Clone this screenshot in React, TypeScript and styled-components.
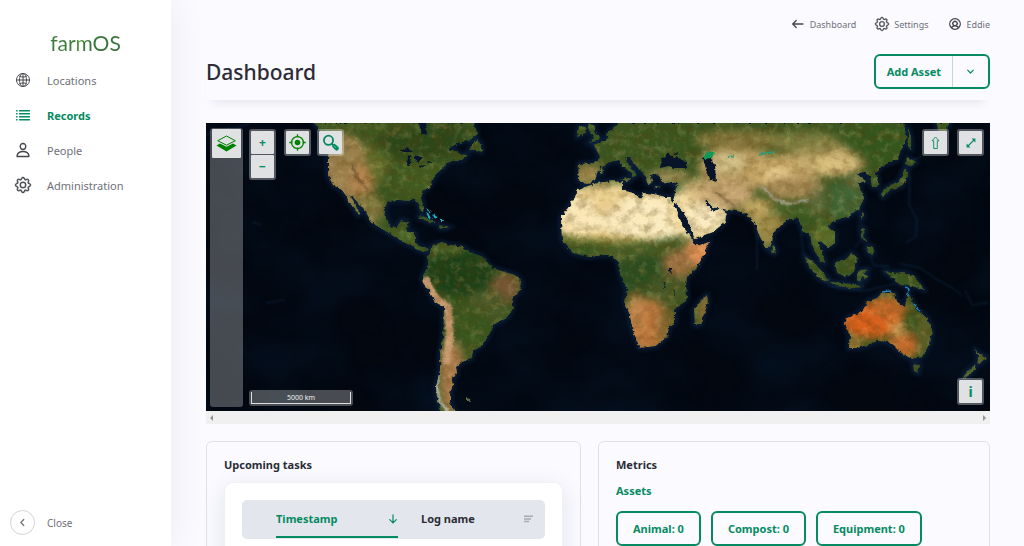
import React from "react";
import styled, { createGlobalStyle, css } from "styled-components";
import { IoGlobeOutline, IoPersonOutline } from "react-icons/io5";
import { BsGear } from "react-icons/bs";
import { PiUserCircleBold } from "react-icons/pi";

const green = "#058a62";
const ink = "#2b2c35";
const muted = "#6f7078";
const iconInk = "#45464c";

const GlobalStyle = createGlobalStyle`
  * { box-sizing: border-box; }
  body {
    margin: 0;
    background: #fafaff;
    color: ${ink};
    font-family: "Noto Sans", "Open Sans", sans-serif;
    font-size: 11px;
  }
  button { font: inherit; color: inherit; cursor: pointer; }
  a { color: inherit; text-decoration: none; }
  h1, h2, h3 { margin: 0; }
`;

const Shell = styled.div`
  display: grid;
  grid-template-columns: 171px minmax(0, 1fr);
  height: 100vh;
`;

const Sidebar = styled.aside`
  display: flex;
  flex-direction: column;
  background: #fff;
  box-shadow: 0 0 36px rgba(20, 45, 82, 0.07);
  z-index: 1;
`;

const Logo = styled.a`
  align-self: center;
  margin: 28px 0 10px;
  font-family: Lato, sans-serif;
  font-size: 21px;
  line-height: 30px;
  color: transparent;
  background: linear-gradient(90deg, #3f7d3f 0 34%, #5f9c35 42%, #38753c 48%);
  background-clip: text;
`;

const Nav = styled.nav`
  display: flex;
  flex-direction: column;
  gap: 11px;
`;

const NavLink = styled.a<{ $active?: boolean }>`
  display: flex;
  align-items: center;
  gap: 16px;
  height: 24px;
  padding-left: 15px;
  color: ${(p) => (p.$active ? green : muted)};
  font-weight: ${(p) => (p.$active ? 700 : 400)};
  svg { width: 16px; height: 16px; color: ${(p) => (p.$active ? green : iconInk)}; }
`;

const Gear = styled(BsGear)`
  stroke: currentColor;
  stroke-width: 0.4;
  overflow: visible;
`;

const Person = styled(IoPersonOutline)`
  path { stroke-width: 44; }
`;

const CollapseButton = styled.button`
  display: flex;
  align-items: center;
  gap: 12px;
  margin: auto 0 11px 10px;
  padding: 0;
  border: 0;
  background: none;
  color: ${muted};
  font-size: 10px;
`;

const CollapseCircle = styled.span`
  display: grid;
  place-items: center;
  width: 25px;
  height: 25px;
  border: 1px solid #d4d4d9;
  border-radius: 50%;
`;

const Main = styled.main`
  padding: 0 34px 0 35px;
  overflow-y: auto;
  scrollbar-width: none;
`;

const TopBar = styled.nav`
  display: flex;
  justify-content: flex-end;
  align-items: center;
  gap: 19px;
  height: 48px;
`;

const TopLink = styled.a`
  display: flex;
  align-items: center;
  gap: 5px;
  font-size: 9px;
  color: ${muted};
  svg { width: 14px; height: 14px; color: ${iconInk}; }
`;

const PageHeader = styled.header`
  display: flex;
  align-items: center;
  justify-content: space-between;
  height: 52px;
  padding-bottom: 5px;
  background: #fafaff;
  box-shadow: 0 9px 9px -6px rgba(35, 36, 41, 0.09);
`;

const Title = styled.h1`
  font-size: 21px;
  font-weight: 500;
  line-height: 30px;
`;

const SplitButton = styled.div`
  display: flex;
  height: 35px;
  border: 2px solid ${green};
  border-radius: 6px;
  color: ${green};
`;

const SplitPart = styled.button`
  display: grid;
  place-items: center;
  padding: 0 11px;
  border: 0;
  background: none;
  font-weight: 700;
  & + & { width: 36px; border-left: 1px solid #b7dcd2; }
`;

const MapFrame = styled.section`
  position: relative;
  height: 288px;
  margin-top: 23px;
  background: #020812;
  overflow: hidden;
  > svg { display: block; width: 100%; height: 100%; }
`;

const MapControl = styled.div<{ $x: number; $y: number; $side?: "left" | "right"; $from?: "top" | "bottom" }>`
  position: absolute;
  ${(p) => css`
    ${p.$side ?? "left"}: ${p.$x}px;
    ${p.$from ?? "top"}: ${p.$y}px;
  `}
  display: grid;
  gap: 1px;
  padding: 2px;
  border-radius: 3px;
  background: rgba(255, 255, 255, 0.32);
`;

const MapButton = styled.button`
  display: grid;
  place-items: center;
  width: 23px;
  height: 23px;
  padding: 0;
  border: 0;
  border-radius: 1px;
  background: #dfe1e2;
  color: ${green};
  font-size: 12px;
  font-weight: 700;
  line-height: 12px;
`;

const InfoButton = styled(MapButton)`
  font-size: 14px;
`;

const LayerPanel = styled.div`
  position: absolute;
  left: 4px;
  top: 5px;
  bottom: 4px;
  width: 33px;
  padding: 1px 2px;
  border-radius: 3px;
  background: rgba(255, 255, 255, 0.27);
`;

const LayerButton = styled(MapButton)`
  width: 29px;
  height: 29px;
`;

const ScaleBar = styled.div`
  position: absolute;
  left: 43px;
  bottom: 5px;
  width: 104px;
  padding: 2px;
  border-radius: 3px;
  background: rgba(255, 255, 255, 0.28);
`;

const ScaleInner = styled.div`
  height: 12px;
  border: 1px solid #ddd;
  border-top: 0;
  color: #eee;
  font-size: 7px;
  line-height: 12px;
  text-align: center;
`;

const ScrollTrack = styled.div`
  display: flex;
  justify-content: space-between;
  align-items: center;
  height: 13px;
  padding: 0 4px;
  background: #f0f0f1;
`;

const ScrollArrow = styled.button`
  display: grid;
  place-items: center;
  padding: 0;
  border: 0;
  background: none;
  color: #929292;
`;

const Columns = styled.div`
  display: grid;
  grid-template-columns: minmax(0, 1fr) minmax(0, 1fr);
  margin: 17px 0;
`;

const Panel = styled.section<{ $spaced?: boolean }>`
  min-height: 180px;
  margin-right: ${(p) => (p.$spaced ? 17 : 0)}px;
  padding: 16px 17px;
  border: 1px solid #e0e0e6;
  border-radius: 6px;
`;

const PanelTitle = styled.h2`
  font-size: 11px;
  font-weight: 700;
  line-height: 14px;
`;

const GroupTitle = styled.h3`
  margin: 12px 0 13px;
  color: ${green};
  font-size: 11px;
  line-height: 14px;
`;

const TableCard = styled.div`
  margin-top: 10px;
  padding: 17px 17px 40px;
  border: 1px solid #f1f1f5;
  border-radius: 9px;
  background: #fff;
  box-shadow: 0 6px 24px rgba(20, 45, 82, 0.1);
`;

const TaskTable = styled.table`
  width: 100%;
  border-collapse: separate;
  border-spacing: 0;
  table-layout: fixed;
`;

const HeadCell = styled.th<{ $width?: string }>`
  width: ${(p) => p.$width ?? "auto"};
  height: 39px;
  padding: 0;
  background: #e3e7ed;
  &:first-child { border-radius: 5px 0 0 5px; }
  &:last-child { padding: 0 12px 0 23px; border-radius: 0 5px 5px 0; }
`;

const SortButton = styled.button<{ $active?: boolean }>`
  display: flex;
  align-items: center;
  justify-content: space-between;
  width: 100%;
  height: 37px;
  padding: 0;
  border: 0;
  border-bottom: 2px solid ${(p) => (p.$active ? green : "transparent")};
  background: none;
  color: ${(p) => (p.$active ? green : ink)};
  font-weight: 700;
`;

const MetricRow = styled.div`
  display: flex;
  flex-wrap: wrap;
  gap: 10px;
`;

const Metric = styled.a`
  display: grid;
  place-items: center;
  height: 35px;
  padding: 0 15px;
  border: 2px solid ${green};
  border-radius: 6px;
  color: ${green};
  font-weight: 700;
`;

const ListIcon = () => (
  <svg viewBox="0 0 16 16" fill="currentColor" aria-hidden>
    {[3, 6, 9, 12].map((y) => (
      <g key={y}>
        <rect x="1" y={y} width="1.6" height="1.4" rx=".5" />
        <rect x="4" y={y} width="11" height="1.4" rx=".5" />
      </g>
    ))}
  </svg>
);

const ArrowLeft = () => (
  <svg viewBox="0 0 14 14" fill="none" stroke="currentColor" strokeWidth="1.3" strokeLinecap="round" strokeLinejoin="round" aria-hidden>
    <path d="M12 7H1.8M5.2 3.5 1.7 7l3.5 3.5" />
  </svg>
);

const Chevron = ({ left }: { left?: boolean }) => (
  <svg width="9" height="9" viewBox="0 0 9 9" fill="none" stroke="currentColor" strokeWidth="1.2" strokeLinecap="round" strokeLinejoin="round" aria-hidden>
    <path d={left ? "M5.8 1.5 2.8 4.5l3 3" : "M1.7 3.2 4.5 6l2.8-2.8"} />
  </svg>
);

const LayersIcon = () => (
  <svg width="23" height="19" viewBox="0 0 23 19" aria-hidden>
    <path d="M1.5 11.5 5 9.6l6.5 3.2L18 9.6l3.5 1.9-10 6Z" fill="#008000" />
    <path d="M11.5 2 20.3 6.7l-8.8 4.5-8.8-4.5Z" fill="#dfe1e2" stroke="#008000" strokeWidth="1" />
  </svg>
);

const LocateIcon = () => (
  <svg width="17" height="17" viewBox="0 0 17 17" fill="none" stroke="#008000" strokeWidth="1.3" aria-hidden>
    <circle cx="8.5" cy="8.5" r="5.9" />
    <circle cx="8.5" cy="8.5" r="2.8" fill="#008000" stroke="none" />
    <path d="M8.5 .3v3M8.5 13.7v3M.3 8.5h3M13.7 8.5h3" />
  </svg>
);

const SearchIcon = () => (
  <svg width="18" height="18" viewBox="0 0 18 18" fill="none" stroke={green} strokeLinecap="round" aria-hidden>
    <circle cx="6.5" cy="6.3" r="4.6" strokeWidth="1.8" />
    <path d="m10 9.8 1.5 1.5" strokeWidth="1.8" />
    <path d="m12.2 12 2.6 2.4" strokeWidth="4.2" />
    <path d="m12 11.8 2 2" stroke="#8fc4b5" strokeWidth=".7" />
  </svg>
);

const NorthIcon = () => (
  <svg width="9" height="14" viewBox="0 0 9 14" fill="none" stroke={green} strokeWidth=".9" aria-hidden>
    <path d="M4.5 1 8 4.8H6.3v7.7H2.7V4.8H1Z" />
  </svg>
);

const ExpandIcon = () => (
  <svg width="10" height="10" viewBox="0 0 10 10" fill={green} aria-hidden>
    <path d="M2 8 8 2" stroke={green} strokeWidth="1.1" />
    <path d="M5.6.6h3.8v3.8ZM.6 5.6v3.8h3.8Z" />
  </svg>
);

const SortDown = () => (
  <svg width="10" height="10" viewBox="0 0 10 10" fill="none" stroke={green} strokeWidth="1.2" strokeLinecap="round" aria-hidden>
    <path d="M5 .8v8M1.7 5.6 5 8.9l3.3-3.3" />
  </svg>
);

const SortLines = () => (
  <svg width="10" height="8" viewBox="0 0 10 8" stroke="#a7a9b2" strokeWidth="1.5" aria-hidden>
    <path d="M1 1.2h9M1 3.9h7M1 6.6h5" />
  </svg>
);

const Triangle = ({ right }: { right?: boolean }) => (
  <svg width="3" height="6" viewBox="0 0 3 6" fill="currentColor" aria-hidden>
    <path d={right ? "M0 0 3 3 0 6Z" : "M3 0 0 3l3 3Z"} />
  </svg>
);

/* Coastlines, in the map's own coordinate space. */
const coast = {
  northAmerica:
    "M314 122 318 128 325 137 330 146 328 158 328 175 333 185 342 190 347 197 349 203 353 206 358 215 360 214 356 205 351 197 348 194 353 197 360 205 367 214 372 223 387 232 400 240 413 247 423 252 429 250 425 247 420 247 415 242 415 233 407 232 408 222 401 220 397 227 391 228 386 218 385 208 388 201 397 200 407 201 415 199 418 203 420 210 423 212 424 207 421 198 422 192 430 187 435 175 443 168 447 163 455 160 462 160 467 155 460 154 456 151 448 149 456 144 462 142 470 140 475 137 477 132 473 125 474 122Z",
  newfoundland: "M477 139 482 146 482 152 476 150 469 150 473 144Z",
  southAmerica:
    "M428 255 433 245 442 242 450 245 463 247 472 253 483 257 492 268 505 272 515 275 522 282 520 290 513 298 513 308 507 318 493 325 487 338 480 347 473 350 472 358 462 362 456 367 457 373 452 380 453 385 450 393 450 403 455 412 441 412 437 397 436 387 440 370 440 353 443 337 444 307 435 302 430 292 423 283 422 277 428 267Z",
  africa:
    "M585 187 597 183 612 181 622 182 622 190 633 193 640 198 644 193 653 194 665 197 670 197 672 202 677 212 683 227 692 238 695 245 701 245 709 242 705 253 697 267 687 277 686 285 687 298 675 310 675 322 669 327 667 337 655 346 640 348 637 342 632 327 630 315 625 303 627 290 620 273 618 262 613 256 608 255 602 255 590 257 573 253 562 240 561 218 568 208 575 197 578 190Z",
  madagascar: "M707 295 708 302 700 325 695 325 694 310 700 302Z",
  eurasia:
    "M618 122 614 128 608 132 606 140 593 145 596 149 600 157 595 163 579 164 578 180 587 184 595 180 597 173 601 168 608 163 618 160 625 168 632 173 632 178 637 175 629 165 625 157 629 157 637 167 643 173 648 184 652 182 651 175 658 173 662 182 672 183 677 182 675 193 673 202 678 205 687 218 693 233 695 239 713 232 725 222 727 213 720 208 713 212 707 205 703 197 713 207 730 210 743 212 755 222 760 237 767 249 772 243 773 233 787 220 797 218 800 223 803 232 810 233 812 247 820 260 825 263 822 252 817 242 820 240 828 248 835 243 835 233 828 227 833 221 847 217 860 208 864 198 860 188 858 183 866 181 860 177 857 174 863 172 870 176 872 187 878 187 878 178 875 173 883 165 897 160 902 148 907 137 903 122Z",
  britain: "M588 123 595 126 594 132 600 137 598 141 589 142 594 138 590 131Z M579 126 586 127 585 134 577 137Z",
  japan: "M907 157 916 162 910 166 906 164Z M905 168 908 176 902 186 890 190 883 197 881 194 887 187 899 181Z",
  sakhalin: "M908 127 911 140 911 151 908 145Z",
  kamchatka: "M936 122 950 122 946 130 941 137 938 129Z",
  borneo: "M835 263 845 260 852 253 857 258 853 272 845 277 837 272Z",
  sumatra: "M805 257 812 261 819 268 828 278 827 282 820 279 810 268Z M828 281 840 283 852 284 864 287 851 288 836 286Z",
  sulawesi: "M860 270 870 269 864 273 868 277 865 280 862 276 860 282 857 277Z",
  philippines: "M861 228 865 229 863 237 868 242 864 240 861 235Z M866 247 872 246 873 254 868 253Z M861 213 864 215 861 220Z",
  newGuinea: "M883 270 892 273 905 272 915 277 924 290 912 286 900 285 893 278Z",
  australia:
    "M847 318 862 312 867 302 877 298 882 293 895 293 897 302 905 307 908 292 913 302 917 310 927 318 932 330 930 343 922 357 912 359 903 355 895 347 888 342 877 341 868 345 857 348 849 348 850 337 845 323Z",
  tasmania: "M913 364 920 365 918 373 914 371Z",
  newZealand: "M974 348 980 355 987 357 979 364 977 360 979 356Z M977 364 972 373 962 380 966 372Z",
  caribbean: "M417 217 424 216 436 223 430 223 423 219Z M440 225 449 227 444 229 439 228Z",
  ceylon: "M773 245 776 250 774 254 771 252Z",
  islands: "M600 167 603 167 602 174 600 173Z M620 179 631 178 628 182Z M655 186 661 187 656 188Z M675 186 680 185 677 188Z",
};

const landPath = Object.values(coast).join(" ");

const inlandWater =
  "M662 158 668 153 673 158 678 157 687 163 687 168 675 168 668 166 660 168Z M673 154 680 152 677 156Z M703 158 709 155 715 165 716 182 709 179 706 170Z M418 122 426 122 427 135 422 133Z M400 151 408 147 413 152 404 152Z M408 156 411 155 410 166 407 166Z M414 155 423 158 419 163 416 161Z M418 166 427 165 421 168Z M427 162 433 162 428 164Z M668 268 672 268 671 273 668 272Z";

/* x, y, rx, ry, colour, opacity of each stretch of terrain */
type Patch = [number, number, number, number, string, number];
const softPatches: Patch[] = [
  [345, 170, 26, 36, "#a88754", 0.9], [364, 180, 13, 16, "#bd8550", 0.8], [338, 148, 12, 16, "#8f7a48", 0.8],
  [368, 210, 16, 16, "#8f7f45", 0.8], [378, 155, 12, 28, "#69742f", 0.8], [420, 138, 50, 22, "#2a4419", 0.8],
  [420, 180, 26, 16, "#455f22", 0.7], [385, 126, 35, 9, "#46591f", 0.6], [400, 238, 20, 6, "#4f6c29", 0.8],
  [460, 272, 36, 24, "#1c3f18", 0.95], [505, 288, 15, 15, "#80593a", 0.9], [488, 306, 20, 16, "#4c5a2a", 0.9],
  [473, 332, 20, 24, "#38561e", 0.9], [450, 250, 16, 4, "#66712b", 0.7], [453, 378, 13, 36, "#ab7c4d", 1],
  [612, 213, 70, 30, "#efd697", 1], [650, 218, 46, 22, "#fbecc2", 1], [580, 216, 20, 18, "#fae8b8", 1],
  [620, 222, 36, 9, "#faeabd", 0.9], [608, 207, 14, 6, "#e2c084", 0.7], [600, 242, 52, 4, "#8e8538", 0.9],
  [585, 250, 30, 7, "#38561f", 1], [640, 255, 50, 11, "#4d6029", 0.9], [645, 275, 32, 20, "#2b4d21", 0.95],
  [700, 252, 16, 15, "#e39058", 1], [678, 265, 15, 15, "#b0764a", 0.85], [668, 290, 22, 14, "#4a5a29", 0.8],
  [647, 325, 24, 26, "#c07a40", 1], [636, 310, 9, 18, "#c48a51", 0.8], [666, 325, 9, 20, "#6f602b", 0.7],
  [588, 174, 14, 10, "#9e874e", 1], [668, 177, 22, 7, "#a1915a", 1], [698, 212, 30, 28, "#f5dfa6", 1],
  [705, 216, 18, 16, "#fbecc4", 1], [700, 190, 14, 12, "#cdb078", 0.9], [735, 168, 36, 26, "#b79b62", 1],
  [728, 195, 26, 15, "#c4a473", 1], [728, 162, 18, 11, "#d3c48d", 0.9], [740, 140, 46, 10, "#8a7a3f", 0.9],
  [782, 172, 36, 18, "#c5a566", 1], [780, 175, 18, 7, "#ecd195", 1], [826, 160, 40, 16, "#c5ab6e", 1],
  [835, 164, 24, 8, "#dcc181", 0.9], [795, 188, 30, 12, "#a68955", 1], [806, 143, 34, 12, "#8a8548", 0.8],
  [818, 202, 12, 14, "#697044", 0.8], [766, 224, 18, 22, "#9b8a48", 1], [756, 208, 16, 9, "#c0a662", 1],
  [790, 210, 22, 5, "#47662c", 0.9], [846, 200, 24, 18, "#426638", 0.9], [856, 180, 10, 8, "#79784a", 0.8],
  [824, 237, 12, 12, "#60752e", 0.9], [880, 143, 32, 20, "#33561e", 0.8], [870, 320, 32, 18, "#d9601c", 1],
  [888, 308, 19, 12, "#c66a2c", 0.9], [903, 345, 16, 14, "#c06a2c", 1], [925, 332, 6, 24, "#67642b", 0.9],
  [853, 345, 10, 7, "#b8853e", 0.8], [897, 329, 5, 8, "#f2c477", 0.9], [704, 310, 6, 18, "#92703a", 1],
  [974, 362, 14, 18, "#5b6f31", 0.7],
];

const softRidges = [
  { d: "M424 278 434 297 448 308 450 335 446 365", color: "#c89a70", width: 8 },
  { d: "M438 372 437 388 440 402 448 411", color: "#dcdfde", width: 2 },
  { d: "M762 186 776 200 790 204 808 200", color: "#b7afa5", width: 2 },
  { d: "M613 157 625 152 M638 145 652 150 649 158", color: "#697044", width: 2 },
  { d: "M352 165 359 181 368 190", color: "#604d2d", width: 2 },
  { d: "M716 192 735 207", color: "#7b6540", width: 2 },
  { d: "M671 203 668 200", color: "#6a7b3d", width: 2 },
];

const WorldMap = () => (
  <svg viewBox="206 123 784 288" preserveAspectRatio="xMidYMid slice" role="img" aria-label="World map">
    <defs>
      <clipPath id="land"><path d={landPath} /></clipPath>
      <filter id="soft" x="-60%" y="-60%" width="220%" height="220%" colorInterpolationFilters="sRGB"><feGaussianBlur stdDeviation="4" /></filter>
      <filter id="ridge" x="-20%" y="-20%" width="140%" height="140%" colorInterpolationFilters="sRGB"><feGaussianBlur stdDeviation="1" /></filter>
      <filter id="shelf" x="-5%" y="-5%" width="110%" height="110%" colorInterpolationFilters="sRGB"><feGaussianBlur stdDeviation="2" /></filter>
      <filter id="rough" x="0" y="0" width="100%" height="100%" colorInterpolationFilters="sRGB">
        <feTurbulence type="fractalNoise" baseFrequency=".25" numOctaves="2" seed="8" result="n" />
        <feDisplacementMap in="SourceGraphic" in2="n" scale="4" xChannelSelector="R" yChannelSelector="G" />
        <feGaussianBlur stdDeviation=".5" />
      </filter>
      <filter id="grain" x="0" y="0" width="100%" height="100%" colorInterpolationFilters="sRGB">
        <feTurbulence type="fractalNoise" baseFrequency=".09 .12" numOctaves="5" seed="21" />
        <feColorMatrix values="0 0 0 0 .36  0 0 0 0 .25  0 0 0 0 .05  2 0 0 0 -.85" />
      </filter>
      <filter id="shine" x="0" y="0" width="100%" height="100%" colorInterpolationFilters="sRGB">
        <feTurbulence type="fractalNoise" baseFrequency=".13" numOctaves="4" seed="5" />
        <feColorMatrix values="0 0 0 0 1  0 0 0 0 .9  0 0 0 0 .6  0 2 0 0 -.95" />
      </filter>
      <filter id="waves" x="0" y="0" width="100%" height="100%" colorInterpolationFilters="sRGB">
        <feTurbulence type="fractalNoise" baseFrequency=".012 .016" numOctaves="5" seed="12" />
        <feColorMatrix values="0 0 0 0 .02  0 0 0 0 .08  0 0 0 0 .15  1.8 0 0 0 -.6" />
      </filter>
    </defs>
    <rect x="206" y="123" width="784" height="288" fill="#020710" />
    <rect x="206" y="123" width="784" height="288" filter="url(#waves)" opacity=".65" />
    <path d={landPath} fill="none" stroke="#0e2444" strokeWidth="4" filter="url(#shelf)" opacity=".9" />
    <g fill="none" stroke="#1b3b62" strokeWidth="1" opacity=".6" filter="url(#ridge)">
      <path d="M801 232 803 252 815 272 830 286 864 291 895 284M854 248 861 240M900 264 920 268 936 279 951 287 963 296M870 255 874 266 890 266M907 177 914 160 928 152M910 177 909 204 917 220 916 236 906 243M206 134 236 128 250 123M757 228 757 270M965 290 972 305 988 303M253 222 261 225M266 303 285 300" />
    </g>
    <g filter="url(#rough)">
      <rect x="206" y="123" width="784" height="288" fill="none" />
      <g clipPath="url(#land)">
        <rect x="206" y="123" width="784" height="290" fill="#3a5520" />
        {softPatches.map(([x, y, rx, ry, color, opacity], i) => (
          <ellipse key={i} cx={x} cy={y} rx={rx} ry={ry} fill={color} opacity={opacity} filter="url(#soft)" />
        ))}
        {softRidges.map((r) => (
          <path key={r.d} d={r.d} fill="none" stroke={r.color} strokeWidth={r.width} filter="url(#ridge)" />
        ))}
        <rect x="206" y="123" width="784" height="290" filter="url(#grain)" opacity=".42" />
        <rect x="206" y="123" width="784" height="290" filter="url(#shine)" opacity=".25" />
      </g>
      <path d={inlandWater} fill="#07142a" />
      <path d="M664 282 665 288M674 290 674 296" stroke="#07142a" strokeWidth="1" />
      <path d="M705 154 710 151 715 154 710 158 705 159Z" fill="#109a55" />
      <path d="M728 156 733 157M759 155 766 153 774 152" stroke="#279b76" strokeWidth="1.4" />
      <path d="M427 209 431 212M427 213 431 219M433 215 437 218M441 221 444 221" stroke="#20a8bd" strokeWidth="2" />
      <path d="M906 287 909 289 908 296M882 292 891 291M914 304 920 311" fill="none" stroke="#2384b5" strokeWidth="1.5" />
      <path d="M466 399 471 400" stroke="#626b45" strokeWidth="2" />
    </g>
  </svg>
);

export default function App() {
  return (
    <>
      <GlobalStyle />
      <Shell>
        <Sidebar>
          <Logo href="#">farmOS</Logo>
          <Nav aria-label="Administration">
            <NavLink href="#"><IoGlobeOutline />Locations</NavLink>
            <NavLink href="#" $active><ListIcon />Records</NavLink>
            <NavLink href="#"><Person />People</NavLink>
            <NavLink href="#"><Gear />Administration</NavLink>
          </Nav>
          <CollapseButton>
            <CollapseCircle><Chevron left /></CollapseCircle>
            Close
          </CollapseButton>
        </Sidebar>
        <Main>
          <TopBar aria-label="Account">
            <TopLink href="#"><ArrowLeft />Dashboard</TopLink>
            <TopLink href="#"><Gear />Settings</TopLink>
            <TopLink href="#"><PiUserCircleBold />Eddie</TopLink>
          </TopBar>
          <PageHeader>
            <Title>Dashboard</Title>
            <SplitButton>
              <SplitPart>Add Asset</SplitPart>
              <SplitPart aria-label="More actions"><Chevron /></SplitPart>
            </SplitButton>
          </PageHeader>
          <MapFrame>
            <WorldMap />
            <LayerPanel><LayerButton aria-label="Layers"><LayersIcon /></LayerButton></LayerPanel>
            <MapControl $x={43} $y={6}>
              <MapButton>+</MapButton>
              <MapButton>−</MapButton>
            </MapControl>
            <MapControl $x={78} $y={6}><MapButton aria-label="Locate"><LocateIcon /></MapButton></MapControl>
            <MapControl $x={111} $y={6}><MapButton aria-label="Search"><SearchIcon /></MapButton></MapControl>
            <MapControl $x={41} $y={6} $side="right"><MapButton aria-label="Reset rotation"><NorthIcon /></MapButton></MapControl>
            <MapControl $x={6} $y={6} $side="right"><MapButton aria-label="Full screen"><ExpandIcon /></MapButton></MapControl>
            <MapControl $x={6} $y={6} $side="right" $from="bottom"><InfoButton>i</InfoButton></MapControl>
            <ScaleBar><ScaleInner>5000 km</ScaleInner></ScaleBar>
          </MapFrame>
          <ScrollTrack>
            <ScrollArrow aria-label="Scroll left"><Triangle /></ScrollArrow>
            <ScrollArrow aria-label="Scroll right"><Triangle right /></ScrollArrow>
          </ScrollTrack>
          <Columns>
            <Panel $spaced>
              <PanelTitle>Upcoming tasks</PanelTitle>
              <TableCard>
                <TaskTable>
                  <thead>
                    <tr>
                      <HeadCell $width="34px" />
                      <HeadCell $width="122px"><SortButton $active>Timestamp<SortDown /></SortButton></HeadCell>
                      <HeadCell><SortButton>Log name<SortLines /></SortButton></HeadCell>
                    </tr>
                  </thead>
                </TaskTable>
              </TableCard>
            </Panel>
            <Panel>
              <PanelTitle>Metrics</PanelTitle>
              <GroupTitle>Assets</GroupTitle>
              <MetricRow>
                <Metric href="#">Animal: 0</Metric>
                <Metric href="#">Compost: 0</Metric>
                <Metric href="#">Equipment: 0</Metric>
              </MetricRow>
            </Panel>
          </Columns>
        </Main>
      </Shell>
    </>
  );
}
